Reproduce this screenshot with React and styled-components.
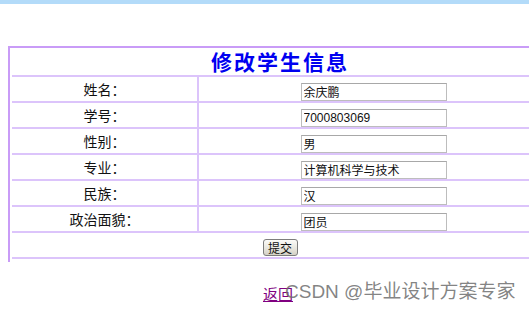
import React from "react";
import styled, { createGlobalStyle } from "styled-components";

const GlobalStyle = createGlobalStyle`
  html, body {
    margin: 0;
    padding: 0;
    overflow: hidden;
    background: #ffffff;
  }
  body {
    font-family: "Noto Sans CJK SC", sans-serif;
    color: #000;
  }
`;

const Page = styled.div`
  position: relative;
  width: 529px;
  height: 312px;
`;

const TopBar = styled.div`
  height: 4px;
  background: #b3dbf9;
`;

const Main = styled.div`
  width: 540px;
  margin: 42px 0 0 8px;
`;

const FormTable = styled.table`
  width: 540px;
  border-collapse: separate;
  border-spacing: 0;
  border-top: 2px solid #c99cf7;
  border-left: 2px solid #c99cf7;
  padding: 0 0 3px 2px;
`;

const TitleCell = styled.td`
  height: 27px;
  padding: 0;
  border-bottom: 2px solid #dcc4fb;
  text-align: center;
  font-family: "Noto Sans CJK SC", sans-serif;
  font-size: 21px;
  font-weight: bold;
  letter-spacing: 2px;
  color: #0000f0;
  line-height: 27px;
`;

const LabelCell = styled.td`
  width: 185px;
  height: 23.4px;
  padding: 0;
  border-bottom: 2px solid #dcc4fb;
  border-right: 2px solid #dcc4fb;
  text-align: center;
  font-size: 14px;
  line-height: 20px;
  color: #111;
`;

const FieldCell = styled.td`
  height: 23.4px;
  padding: 0;
  border-bottom: 2px solid #dcc4fb;
  text-align: center;
  vertical-align: middle;
`;

const ActionCell = styled(FieldCell)``;

const TextInput = styled.input`
  box-sizing: border-box;
  width: 146px;
  height: 18px;
  margin: 0;
  padding: 0 2px;
  border: 1px solid #bdbdbd;
  border-top-color: #a8a8a8;
  font-family: "Liberation Sans", "Noto Sans CJK SC", sans-serif;
  font-size: 12px;
  color: #111;
  vertical-align: middle;
  outline: none;
`;

const SubmitButton = styled.button`
  box-sizing: border-box;
  width: 35px;
  height: 17px;
  margin: 0;
  padding: 0;
  border: 1px solid #7d7d7d;
  border-radius: 3px;
  background: linear-gradient(#fbfbf8, #e6e4dc 60%, #d4d1c6);
  font-family: "Noto Sans CJK SC", sans-serif;
  font-size: 12px;
  line-height: 14px;
  color: #111;
  vertical-align: middle;
`;

const BackRow = styled.div`
  margin-top: 21px;
  text-align: center;
  font-size: 15px;
  line-height: 22px;
`;

const BackLink = styled.a`
  color: #800080;
  text-decoration: underline;
`;

const Watermark = styled.div`
  position: absolute;
  left: 285px;
  top: 282px;
  font-family: "Liberation Sans", "Noto Sans CJK SC", sans-serif;
  font-size: 19px;
  line-height: 20px;
  color: rgba(110, 110, 110, 0.85);
  white-space: nowrap;
  pointer-events: none;
`;

const fields = [
  { label: "姓名：", value: "余庆鹏" },
  { label: "学号：", value: "7000803069" },
  { label: "性别：", value: "男" },
  { label: "专业：", value: "计算机科学与技术" },
  { label: "民族：", value: "汉" },
  { label: "政治面貌：", value: "团员" },
];

export default function App() {
  return (
    <Page>
      <GlobalStyle />
      <TopBar />
      <Main>
        <FormTable>
          <tbody>
            <tr>
              <TitleCell colSpan={2}>修改学生信息</TitleCell>
            </tr>
            {fields.map((f) => (
              <tr key={f.label}>
                <LabelCell>{f.label}</LabelCell>
                <FieldCell>
                  <TextInput type="text" defaultValue={f.value} />
                </FieldCell>
              </tr>
            ))}
            <tr>
              <ActionCell colSpan={2}>
                <SubmitButton type="button">提交</SubmitButton>
              </ActionCell>
            </tr>
          </tbody>
        </FormTable>
        <BackRow>
          <BackLink href="#">返回</BackLink>
        </BackRow>
      </Main>
      <Watermark>CSDN @毕业设计方案专家</Watermark>
    </Page>
  );
}
